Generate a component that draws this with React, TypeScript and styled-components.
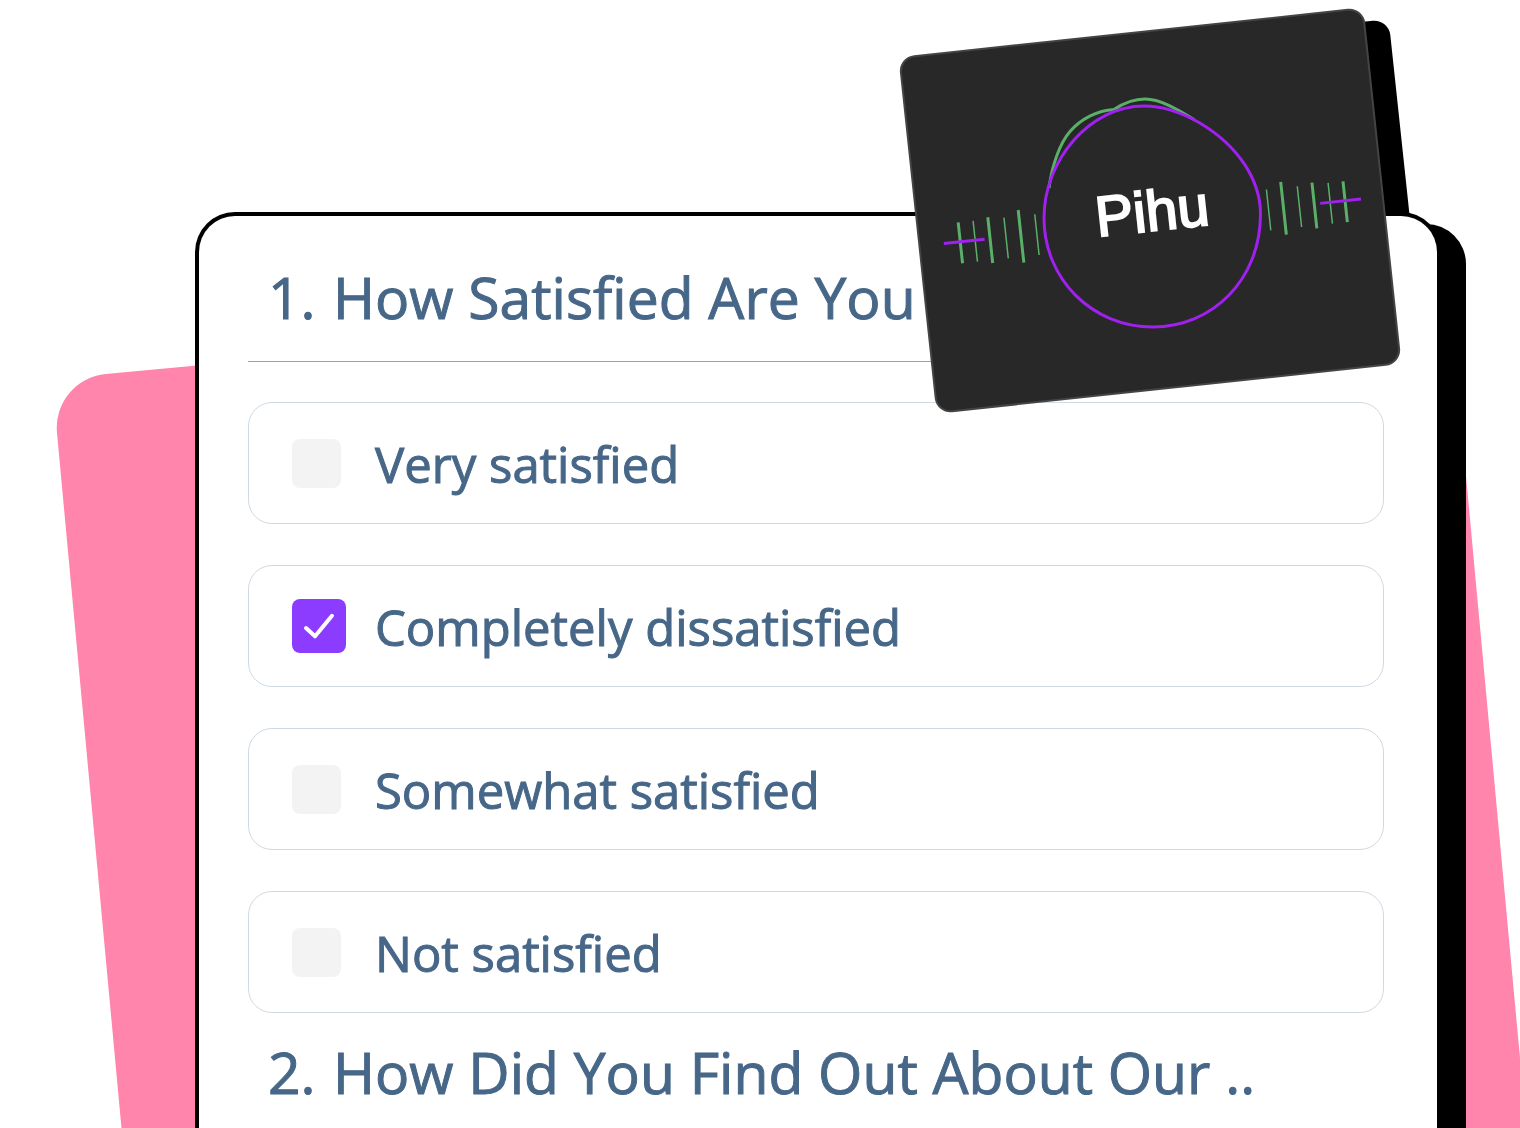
import React, { useState } from "react";
import styled, { createGlobalStyle } from "styled-components";

const GlobalStyle = createGlobalStyle`
  *, *::before, *::after { box-sizing: border-box; }
  body {
    margin: 0;
    background: #ffffff;
    font-family: "Open Sans", "Noto Sans", sans-serif;
    color: #476788;
  }
`;

const Page = styled.main`
  position: relative;
  display: flex;
  flex-direction: column;
  height: 100vh;
  overflow: hidden;
  padding: 212px 79px 0 195px;
`;

const PinkSheet = styled.div`
  position: absolute;
  top: 379px;
  left: 52px;
  width: calc(100% - 121px);
  height: 100%;
  border-radius: 54px;
  background: #ff85ad;
  transform: rotate(-5.3deg);
  transform-origin: top left;
`;

const Tilted = styled.div`
  position: absolute;
  width: 468px;
  height: 359px;
  border-radius: 16px;
  transform: rotate(-6.1deg);
`;

const CardShadow = styled(Tilted)`
  top: 43px;
  right: 111px;
  background: #000000;
`;

const VoiceCard = styled(Tilted)`
  top: 31px;
  right: 136px;
  display: flex;
  align-items: center;
  justify-content: center;
  border: 2px solid #444444;
  background: #282828;
`;

const VoiceArt = styled.svg`
  position: absolute;
  inset: -2px;
  width: 468px;
  height: 359px;
`;

const VoiceName = styled.span`
  position: relative;
  padding-left: 4px;
  font-family: "Liberation Sans", Arial, sans-serif;
  font-size: 57px;
  line-height: 64px;
  font-weight: 400;
  -webkit-text-stroke: 2px currentColor;
  color: #ffffff;
`;

const Panel = styled.div`
  position: relative;
  flex: 1 0 auto;
  padding: 45px 53px 0 49px;
  border: 4px solid #000000;
  border-bottom: 0;
  border-radius: 40px 40px 0 0;
  background: #ffffff;
  box-shadow: 25px 12px 0 #000000;
`;

const Question = styled.h2<{ $ruled?: boolean }>`
  display: flex;
  margin: 0;
  padding: 0 20px ${(p) => (p.$ruled ? 28 : 0)}px;
  border-bottom: ${(p) => (p.$ruled ? "1px solid #a0a0a0" : "0")};
  font-size: 57px;
  line-height: 72px;
  font-weight: 500;
  -webkit-text-stroke: 1px currentColor;
  white-space: nowrap;
`;

const QuestionNumber = styled.span`
  flex: 0 0 65px;
`;

const Options = styled.div`
  display: flex;
  flex-direction: column;
  gap: 41px;
  margin: 40px 0 23px;
`;

const Option = styled.label`
  display: flex;
  align-items: center;
  gap: 29px;
  height: 122px;
  padding: 0 43px;
  border: 1px solid #d0dae3;
  border-radius: 24px;
  cursor: pointer;
`;

const OptionText = styled.span`
  padding-top: 2px;
  font-size: 49px;
  line-height: 64px;
  font-weight: 500;
  -webkit-text-stroke: 1px currentColor;
`;

const CheckCell = styled.span`
  display: grid;
  flex: 0 0 54px;
  align-items: center;

  > * {
    grid-area: 1 / 1;
  }
`;

const CheckBox = styled.input`
  appearance: none;
  width: 49px;
  height: 49px;
  margin: 0;
  border-radius: 8px;
  background: #f3f3f3;
  cursor: pointer;

  &:checked {
    width: 54px;
    height: 54px;
    background: #8c3cff;
  }
`;

const CheckMark = styled.svg`
  width: 54px;
  height: 54px;
  pointer-events: none;
`;

const thickBars = [
  [42, 171, 212], [72, 169, 215], [103, 165, 218],
  [367, 165, 218], [398, 169, 215], [429, 171, 212],
];
const thinBars = [
  [57, 171, 212], [88, 171, 212], [119, 171, 212],
  [352, 171, 212], [383, 171, 212], [414, 171, 212],
];

const bars = (list: number[][]) => list.map(([x, a, b]) => `M${x} ${a}V${b}`).join("");

const answers = ["Very satisfied", "Completely dissatisfied", "Somewhat satisfied", "Not satisfied"];

export default function App() {
  const [picked, setPicked] = useState("Completely dissatisfied");

  return (
    <>
      <GlobalStyle />
      <Page>
        <PinkSheet />
        <CardShadow />
        <Panel>
          <Question id="q1" $ruled>
            <QuestionNumber>1.</QuestionNumber>
            How Satisfied Are You
          </Question>
          <Options role="group" aria-labelledby="q1">
            {answers.map((answer) => (
              <Option key={answer}>
                <CheckCell>
                  <CheckBox
                    type="checkbox"
                    checked={picked === answer}
                    onChange={() => setPicked(picked === answer ? "" : answer)}
                  />
                  {picked === answer && (
                    <CheckMark viewBox="0 0 54 54" fill="none" aria-hidden="true">
                      <path d="M14 29L23 37.3L40 16.8" stroke="#fff" strokeWidth="4" strokeLinecap="round" strokeLinejoin="round" />
                    </CheckMark>
                  )}
                </CheckCell>
                <OptionText>{answer}</OptionText>
              </Option>
            ))}
          </Options>
          <Question>
            <QuestionNumber>2.</QuestionNumber>
            How Did You Find Out About Our ..
          </Question>
        </Panel>
        <VoiceCard>
          <VoiceArt viewBox="0 0 468 359" fill="none" aria-hidden="true">
            <path d={bars(thickBars)} stroke="#5ab068" strokeWidth="3" />
            <path d={bars(thinBars)} stroke="#5ab068" strokeWidth="1.5" />
            <path d="M25.5 190.5H66.5M404 190.5H445" stroke="#a020f0" strokeWidth="3" />
            <g transform="rotate(6.1 234 179.5) translate(-916 -31)" strokeWidth="3">
              <path
                d="M1049 188C1052 165 1060 143 1070 131.5C1081 119 1097 110.5 1114 109.5C1123 103.5 1134 99 1145 99C1160 99 1177 109 1194 119.5"
                stroke="#5ab068"
              />
              <path
                d="M1044 218C1044 160 1090 106 1144 106C1164 106 1184 114 1199 122.5C1239 146 1260.5 181 1260.5 214C1260.5 280 1212 327 1153 327C1092 327 1044 279 1044 218Z"
                stroke="#a020f0"
              />
            </g>
          </VoiceArt>
          <VoiceName>Pihu</VoiceName>
        </VoiceCard>
      </Page>
    </>
  );
}
